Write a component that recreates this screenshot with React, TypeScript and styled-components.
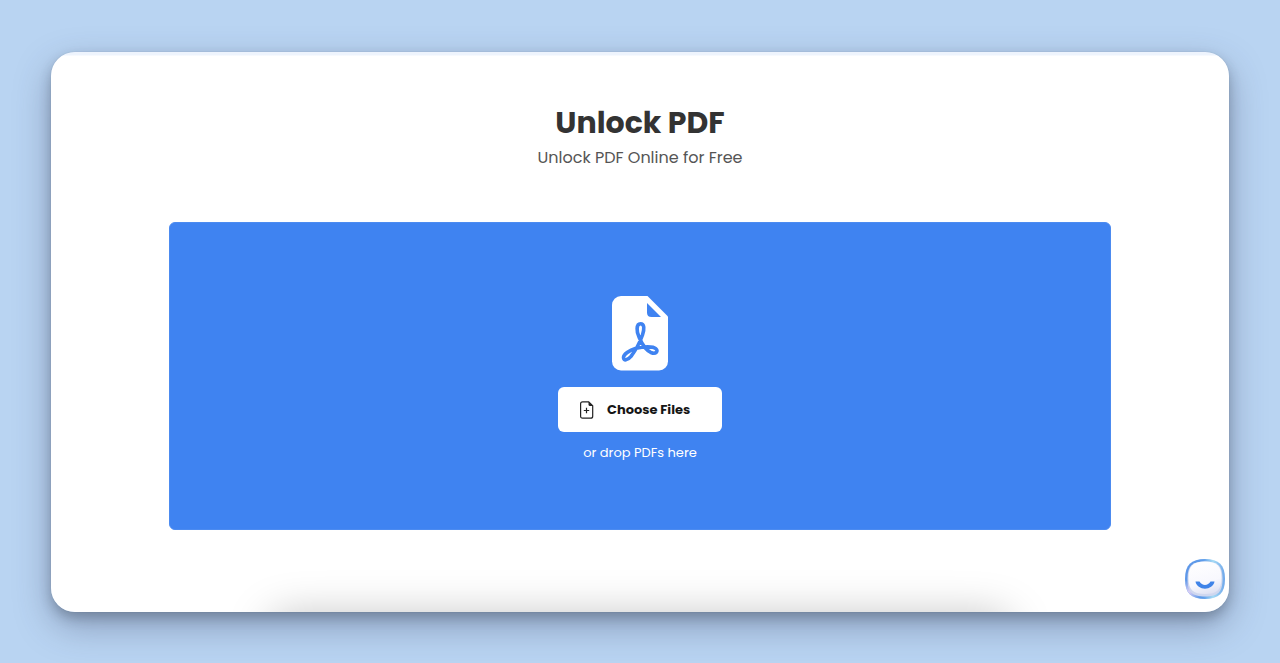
import React, { useRef } from "react";
import styled, { createGlobalStyle } from "styled-components";

const GlobalStyle = createGlobalStyle`
  *, *::before, *::after { box-sizing: border-box; }
  body {
    margin: 0;
    background: #b9d4f2;
    font-family: Poppins, Inter, "Liberation Sans", sans-serif;
  }
`;

const Page = styled.div`
  min-height: 100vh;
  padding: 52px 51px 51px;
`;

const Window = styled.main`
  position: relative;
  display: flex;
  flex-direction: column;
  align-items: center;
  min-height: calc(100vh - 103px);
  border-radius: 24px;
  box-shadow:
    0 0 1px rgba(50, 60, 80, 0.3),
    0 6px 12px rgba(40, 50, 60, 0.28),
    0 14px 36px rgba(50, 55, 90, 0.36);
`;

const Content = styled.div`
  width: 100%;
  flex: 1;
  display: flex;
  flex-direction: column;
  align-items: center;
  padding-top: 51px;
  border-radius: 24px;
  overflow: hidden;
  background: linear-gradient(#eef4fd 3px, #fff 4px);
`;

const Title = styled.h1`
  margin: 0;
  color: #333;
  font-size: 30px;
  line-height: 40px;
  font-weight: 700;
`;

const Subtitle = styled.p`
  margin: 3px 0 52px;
  color: #555;
  font-size: 16px;
  line-height: 24px;
`;

const DropZone = styled.section`
  width: 80%;
  min-height: 308px;
  display: flex;
  flex-direction: column;
  align-items: center;
  padding: 73px 20px 0;
  border: 1px solid #4c8bf0;
  border-radius: 6px;
  background: #3f83f1;
`;

const ChooseButton = styled.button`
  display: flex;
  align-items: center;
  gap: 13px;
  width: 164px;
  height: 45px;
  margin: 16px 0 11px;
  padding: 0 0 0 22px;
  border: 0;
  border-radius: 6px;
  background: #fff;
  color: #161616;
  font: inherit;
  font-size: 13px;
  font-weight: 700;
  cursor: pointer;
`;

const DropHint = styled.p`
  margin: 0;
  color: #fff;
  font-size: 13px;
  line-height: 20px;
`;

const NextPanel = styled.div`
  width: 63%;
  height: 40px;
  margin-top: auto;
  margin-bottom: -40px;
  border-radius: 20px;
  box-shadow: 0 4px 44px rgba(0, 0, 0, 0.26);
`;

const ChatButton = styled.button`
  position: absolute;
  right: 3px;
  bottom: 12px;
  width: 42px;
  height: 42px;
  padding: 0;
  border: 0;
  background: none;
  cursor: pointer;

  svg { display: block; }
`;

const PdfIcon = () => (
  <svg width="56" height="75" viewBox="0 0 56 75" aria-hidden="true">
    <path fill="#fff" d="M9 0H35.5L56 20.500V65.500A9 9 0 0 1 47 74.500H9A9 9 0 0 1 0 65.500V9A9 9 0 0 1 9 0Z" />
    <path fill="#3f83f1" d="M35 7V16.500Q35 21 39.500 21H49Z" />
    <path
      fill="none"
      stroke="#3f83f1"
      strokeWidth="3.600"
      strokeLinejoin="round"
      d="M28.500 27.700C24 27.700 24.500 36 27 41C29.500 47 34 54.500 39.500 56.800C44 58.500 46.500 55 44 52.800C41 50 31 50.500 24 52.300C17 54.300 11.500 58.500 11.500 61.500C11.500 65 15.500 64.500 19 60.300C23.500 54.500 28 46 30.500 39C32.500 33 32.500 27.700 28.500 27.700Z"
    />
  </svg>
);

const AddFileIcon = () => (
  <svg width="14" height="18" viewBox="0 0 14 18" fill="none" stroke="#222" aria-hidden="true">
    <path strokeWidth="1.200" d="M2.600 .8H8.700L12.700 4.800V15.200Q12.700 17.200 10.700 17.200H2.600Q.6 17.200 .6 15.200V2.800Q.6 .8 2.600 .8Z" />
    <path fill="#222" stroke="none" d="M8.500 .8V3.500Q8.500 5 10 5H12.800Z" />
    <path strokeWidth="1.200" d="M6.500 6.800V12.200M3.800 9.500H9.200" />
  </svg>
);

const SmileIcon = () => (
  <svg width="42" height="42" viewBox="0 0 42 42" aria-hidden="true">
    <defs>
      <linearGradient id="rim" x1="0" y1="0" x2="1" y2="0">
        <stop offset="0" stopColor="#5e97e8" />
        <stop offset=".45" stopColor="#5c9bea" />
        <stop offset=".7" stopColor="#a6dbf5" />
        <stop offset="1" stopColor="#6ea6ea" />
      </linearGradient>
      <radialGradient id="glow" cx=".1" cy=".82" r=".3">
        <stop offset="0" stopColor="#dccff5" />
        <stop offset="1" stopColor="#dccff5" stopOpacity="0" />
      </radialGradient>
      <linearGradient id="face" x1=".3" y1="0" x2=".6" y2="1">
        <stop offset="0" stopColor="#fff" />
        <stop offset=".65" stopColor="#f8f8fe" />
        <stop offset="1" stopColor="#dfe2f3" />
      </linearGradient>
    </defs>
    <path fill="url(#rim)" d="M21 1C35 1 41 7 41 21S35 41 21 41S1 35 1 21S7 1 21 1Z" />
    <path fill="url(#glow)" d="M21 1C35 1 41 7 41 21S35 41 21 41S1 35 1 21S7 1 21 1Z" />
    <path fill="#cfd7ef" d="M21 3.500C34 3.500 38.500 8 38.500 21S34 38.500 21 38.500S3.500 34 3.500 21S8 3.500 21 3.500Z" />
    <path fill="url(#face)" d="M21 3.500C33 3.500 37.500 8 37.500 20S33 36 21 36S4.500 32 4.500 20S9 3.500 21 3.500Z" />
    <path fill="#3f83e8" d="M11.500 23.500H15.500C18 28 24 28 26.500 23.500H30.500C29 33 13 33 11.500 23.500Z" />
  </svg>
);

export default function App() {
  const fileInput = useRef<HTMLInputElement>(null);

  return (
    <Page>
      <GlobalStyle />
      <Window>
        <Content>
          <Title>Unlock PDF</Title>
          <Subtitle>Unlock PDF Online for Free</Subtitle>
          <DropZone>
            <PdfIcon />
            <ChooseButton type="button" onClick={() => fileInput.current?.click()}>
              <AddFileIcon />
              Choose Files
            </ChooseButton>
            <input ref={fileInput} type="file" accept="application/pdf" multiple hidden aria-label="Choose Files" />
            <DropHint>or drop PDFs here</DropHint>
          </DropZone>
          <NextPanel />
        </Content>
        <ChatButton type="button" aria-label="Open chat">
          <SmileIcon />
        </ChatButton>
      </Window>
    </Page>
  );
}
